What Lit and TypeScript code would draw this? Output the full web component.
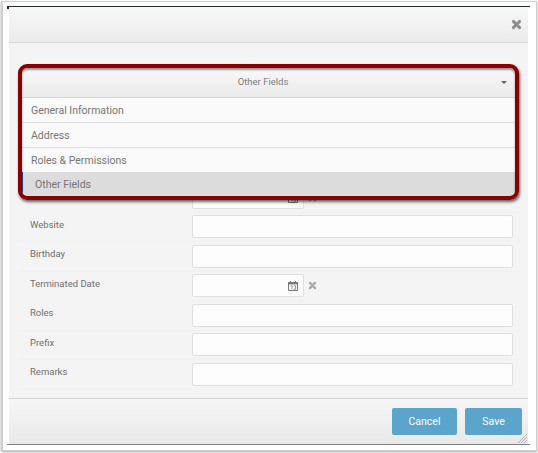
import { LitElement, html, css, svg } from "lit";
import { customElement } from "lit/decorators.js";

const closeIcon = (cls: string) => html`<svg class=${cls} viewBox="0 0 10 10"><path d="M2.2 2.2L7.8 7.8M7.8 2.2L2.2 7.8" fill="none" stroke="currentColor" stroke-width="2.7" stroke-linecap="round"/></svg>`;
const calendar = html`<svg class="cal" viewBox="0 0 10 10"><path d="M0.5 1.5H9.5V9.5H0.5Z" fill="none" stroke="#777" stroke-width="1"/><path d="M0 1H10V3.4H0Z" fill="#777"/><path d="M2.5 0V2M7.5 0V2" stroke="#777" stroke-width="1"/><path d="M2.5 4.8H4V8.2M5.6 4.8H7.6V8.2H5.6" fill="none" stroke="#888" stroke-width=".9"/></svg>`;

interface Row { label: string; date?: boolean }
const rows: Row[] = [
  { label: "" },
  { label: "" },
  { label: "", date: true },
  { label: "Website" },
  { label: "Birthday" },
  { label: "Terminated Date", date: true },
  { label: "Roles" },
  { label: "Prefix" },
  { label: "Remarks" },
];

@customElement("app-root")
export class AppRoot extends LitElement {
  static styles = css`
    :host {
      display: block;
      width: 538px;
      height: 453px;
      background: #fff;
      box-sizing: border-box;
      padding: 1px 1px 2px 1px;
      font-family: Roboto, "Liberation Sans", sans-serif;
      font-size: 10.5px;
      color: #767676;
      overflow: hidden;
    }
    * { box-sizing: border-box; }
    .frame {
      height: 450px;
      background: #fff;
      border: 1px solid #cfcfcf;
      border-left-width: 2px;
      box-shadow: 0 1px 2px rgba(0,0,0,.35);
      padding: 4px 6px 4px 4px;
    }
    .shot {
      position: relative;
      height: 439px;
      border-top: 1px solid #23262b;
      border-bottom: 1px solid #808080;
      padding: 0 2px;
    }
    .shot::before {
      content: "";
      position: absolute;
      left: 0; top: 0;
      width: 2px; height: 2px;
      background: #23262b;
    }
    .modal {
      position: relative;
      height: 437px;
      display: flex;
      flex-direction: column;
      background: #f4f4f4;
      border-radius: 2px 2px 0 0;
    }
    .head {
      flex: none;
      height: 36px;
      border-bottom: 1px solid #d9d9d9;
      background: linear-gradient(#f8f8f8, #ebebeb);
      display: flex;
      align-items: center;
      justify-content: flex-end;
      padding: 0 6px 1px 0;
      color: #8e8e8e;
    }
    .x-big { width: 11px; height: 11px; }
    .body {
      flex: 1;
      min-height: 0;
      overflow: hidden;
      padding: 25px 8px 0 10px;
    }
    .picker {
      position: relative;
      margin: 0 5px 26px 3px;
      height: 30px;
    }
    .select {
      height: 30px;
      border-bottom: 1px solid #d6d6d6;
      background: linear-gradient(#f8f8f8, #ebebeb);
      display: flex;
      align-items: center;
      justify-content: center;
      padding: 0 11px 3px 0;
      position: relative;
      font-size: 9.5px;
      color: #808080;
    }
    .caret {
      position: absolute;
      right: 8px;
      top: 13px;
      width: 0; height: 0;
      border-left: 3px solid transparent;
      border-right: 3px solid transparent;
      border-top: 3px solid #666;
    }
    .panel {
      position: absolute;
      left: 0; right: 0; top: 30px;
      background: #fafafa;
      z-index: 2;
      border-radius: 0 0 5px 5px;
      overflow: hidden;
    }
    .opt {
      height: 25px;
      border-bottom: 1px solid #dedede;
      padding: 0 0 0 9px;
      display: flex;
      align-items: center;
    }
    .opt.last { height: 24px; border-bottom: none; }
    .opt.on {
      height: 24px;
      border-bottom: none;
      background: #dcdcdc;
      border-left: 1px solid #1f4f9e;
      padding-left: 12px;
    }
    .ring {
      position: absolute;
      left: -4px; right: -4px; top: -4px;
      height: 136px;
      border: 4px solid #8b0000;
      border-radius: 9px;
      z-index: 3;
      box-shadow: 1px 2px 3px rgba(0,0,0,.6), inset 0 2px 2px rgba(0,0,0,.4);
      pointer-events: none;
    }
    .row {
      height: 29.5px;
      border-bottom: 1px dotted #ececec;
      padding: 2.5px 7px 0 11px;
      display: grid;
      grid-template-columns: 162px 1fr;
    }
    .row label { font-size: 9.5px; line-height: 14px; padding-top: 2.5px; color: #707070; }
    .field { display: flex; align-items: center; height: 23px; }
    .input {
      flex: 1;
      height: 23px;
      border: 1px solid #dfdfdf;
      border-radius: 2px;
      background: #fdfdfd;
    }
    .input.date {
      flex: none;
      width: 112px;
      display: flex;
      align-items: center;
      justify-content: flex-end;
      padding-right: 5px;
    }
    .cal { width: 10px; height: 10px; margin-top: 1px; }
    .x-small { width: 9px; height: 9px; margin-left: 4px; color: #ababab; }
    .foot {
      flex: none;
      height: 46px;
      border-top: 1px solid #d2d2d2;
      background: linear-gradient(#f6f6f6, #e9e9e9);
      display: flex;
      justify-content: flex-end;
      gap: 8px;
      padding: 9px 6px 0 0;
    }
    button {
      height: 27px;
      border: none;
      border-radius: 2px;
      background: #5ba5cd;
      color: #fff;
      font: inherit;
      padding: 0;
    }
    .cancel { width: 65px; }
    .save { width: 57px; }
    .grip {
      position: absolute;
      right: 1px; bottom: 1px;
      width: 9px; height: 9px;
    }
  `;

  render() {
    return html`
      <div class="frame">
        <div class="shot">
          <div class="modal">
            <div class="head">${closeIcon("x-big")}</div>
            <div class="body">
              <div class="picker">
                <div class="select">Other Fields<span class="caret"></span></div>
                <div class="panel">
                  <div class="opt">General Information</div>
                  <div class="opt">Address</div>
                  <div class="opt last">Roles &amp; Permissions</div>
                  <div class="opt on">Other Fields</div>
                </div>
                <div class="ring"></div>
              </div>
              ${rows.map(
                (r) => html`
                  <div class="row">
                    <label>${r.label}</label>
                    <div class="field">
                      ${r.date
                        ? html`<div class="input date">${calendar}</div>${closeIcon("x-small")}`
                        : html`<div class="input"></div>`}
                    </div>
                  </div>
                `
              )}
            </div>
            <div class="foot">
              <button class="cancel">Cancel</button>
              <button class="save">Save</button>
            </div>
            <svg class="grip" viewBox="0 0 9 9">
              ${svg`<path d="M0 9L9 0M3 9L9 3M6 9L9 6" stroke="#b5b5b5" stroke-width="1" fill="none"/>`}
            </svg>
          </div>
        </div>
      </div>
    `;
  }
}
